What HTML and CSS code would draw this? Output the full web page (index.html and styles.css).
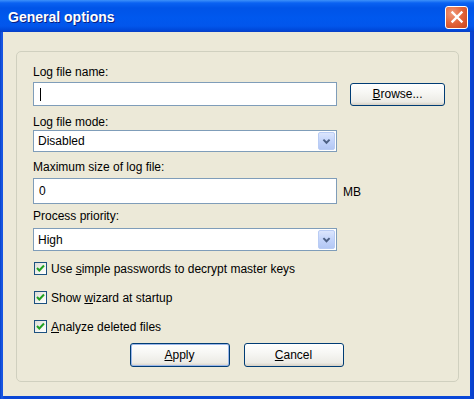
FILE: index.html
```html
<!DOCTYPE html>
<html>
<head>
<meta charset="utf-8">
<link rel="stylesheet" href="styles.css">
</head>
<body>
<div class="window">
  <div class="titlebar">
    <span class="title">General options</span>
    <div class="close">
      <svg width="20" height="20" viewBox="0 0 20 20"><path d="M5.5 5.5 L14.5 14.5 M14.5 5.5 L5.5 14.5" stroke="#fff" stroke-width="2.4" stroke-linecap="square"/></svg>
    </div>
  </div>
  <div class="client">
    <div class="group">
      <div class="field f1">
        <div class="label">Log file name:</div>
        <div class="row">
          <div class="textbox t1"><span class="caret"></span></div>
          <div class="btn browse"><u>B</u>rowse...</div>
        </div>
      </div>
      <div class="field f2">
        <div class="label">Log file mode:</div>
        <div class="select"><span class="value">Disabled</span><span class="drop"><svg width="17" height="20" viewBox="0 0 17 20"><path d="M5 8.5 L8.5 12 L12 8.5" fill="none" stroke="#4D6185" stroke-width="2.2"/></svg></span></div>
      </div>
      <div class="field f3">
        <div class="label">Maximum size of log file:</div>
        <div class="row">
          <div class="textbox t3"><span class="num">0</span></div>
          <span class="unit">MB</span>
        </div>
      </div>
      <div class="field f4">
        <div class="label">Process priority:</div>
        <div class="select s2"><span class="value">High</span><span class="drop"><svg width="17" height="21" viewBox="0 0 17 21"><path d="M5 9 L8.5 12.5 L12 9" fill="none" stroke="#4D6185" stroke-width="2.2"/></svg></span></div>
      </div>
      <div class="checks">
        <div class="check"><span class="box"><svg width="11" height="11" viewBox="0 0 11 11"><path d="M2 5 L4.3 7.5 L9 2.5" fill="none" stroke="#21A121" stroke-width="2"/></svg></span><span>Use <u>s</u>imple passwords to decrypt master keys</span></div>
        <div class="check"><span class="box"><svg width="11" height="11" viewBox="0 0 11 11"><path d="M2 5 L4.3 7.5 L9 2.5" fill="none" stroke="#21A121" stroke-width="2"/></svg></span><span>Show <u>w</u>izard at startup</span></div>
        <div class="check"><span class="box"><svg width="11" height="11" viewBox="0 0 11 11"><path d="M2 5 L4.3 7.5 L9 2.5" fill="none" stroke="#21A121" stroke-width="2"/></svg></span><span><u>A</u>nalyze deleted files</span></div>
      </div>
      <div class="buttons">
        <div class="btn big default"><u>A</u>pply</div>
        <div class="btn big"><u>C</u>ancel</div>
      </div>
    </div>
  </div>
</div>
</body>
</html>
```

FILE: styles.css
```css
html, body {
  margin: 0;
  padding: 0;
  width: 474px;
  height: 399px;
  overflow: hidden;
  background: #0A46D8;
}
.window {
  width: 474px;
  height: 399px;
  display: flex;
  flex-direction: column;
  background: linear-gradient(90deg, #0842C9 0, #1B5AE6 2px, #0A47D6 4px, #0847D8 470px, #0A3EC8 474px);
  font-family: "Liberation Sans", Arial, sans-serif;
  font-size: 12px;
  color: #000;
}
.titlebar {
  height: 32px;
  flex: none;
  display: flex;
  align-items: center;
  justify-content: space-between;
  padding: 0 6px 0 8px;
  box-sizing: border-box;
  background: linear-gradient(180deg, #3D91FA 0, #0A62F2 3px, #0054E8 8px, #0058EE 18px, #0256EC 26px, #0048DA 30px, #0A3FC4 32px);
}
.title {
  color: #fff;
  font-weight: bold;
  font-size: 14px;
  padding-top: 1px;
  text-shadow: 1px 1px 0 #0A1E80;
}
.close {
  width: 21px;
  height: 21px;
  border: 1px solid #fff;
  border-radius: 3px;
  background: radial-gradient(circle at 30% 30%, #F09A7A 0, #E2643A 50%, #C8441C 100%);
  display: flex;
  align-items: center;
  justify-content: center;
  margin-top: 2px;
}
.client {
  flex: 1;
  margin: 0 4px 3px 3px;
  background: #ECE9D8;
  padding: 19px 11px 14px 13px;
  display: flex;
}
.group {
  flex: 1;
  border: 1px solid #D0D0BF;
  border-radius: 5px;
  padding: 13px 12px 12px 16px;
  display: flex;
  flex-direction: column;
}
.label {
  line-height: 14px;
  height: 14px;
}
.f1 .label { margin-bottom: 3px; }
.f2 { margin-top: 9px; }
.f2 .label { margin-bottom: 1px; }
.f3 { margin-top: 8px; }
.f3 .label { margin-bottom: 4px; }
.f4 { margin-top: 5px; }
.f4 .label { margin-bottom: 5px; }
.row {
  display: flex;
  align-items: center;
}
.textbox {
  width: 304px;
  box-sizing: border-box;
  border: 1px solid #7F9DB9;
  background: #fff;
  display: flex;
  align-items: center;
}
.t1 { height: 24px; padding-left: 6px; }
.t3 { height: 26px; padding-left: 5px; }
.caret {
  width: 1px;
  height: 13px;
  background: #000;
}
.unit {
  margin-left: 6px;
  padding-top: 2px;
}
.select {
  width: 304px;
  height: 22px;
  box-sizing: border-box;
  border: 1px solid #7F9DB9;
  background: #fff;
  display: flex;
  justify-content: space-between;
  padding: 1px;
}
.s2 { height: 23px; }
.value {
  padding-left: 3px;
  line-height: 19px;
}
.s2 .value { line-height: 20px; }
.drop {
  width: 17px;
  box-sizing: border-box;
  border: 1px solid #B9CCF4;
  border-radius: 2px;
  background: linear-gradient(180deg, #DCE6FD 0, #C3D4FA 50%, #B3C7F4 100%);
  display: flex;
  align-items: center;
  justify-content: center;
}
.drop svg { display: block; }
.btn {
  box-sizing: border-box;
  border: 1px solid #003C74;
  border-radius: 3px;
  background: linear-gradient(180deg, #FFFFFF 0, #F7F7F4 40%, #ECEBE5 85%, #D6D0C5 100%);
  display: flex;
  align-items: center;
  justify-content: center;
}
.browse {
  width: 95px;
  height: 23px;
  margin-left: 13px;
}
.checks {
  margin-top: 11px;
  display: flex;
  flex-direction: column;
  gap: 16px;
}
.check {
  display: flex;
  align-items: center;
  height: 13px;
  gap: 4px;
}
.box {
  width: 13px;
  height: 13px;
  box-sizing: border-box;
  border: 1px solid #1C5180;
  background: linear-gradient(135deg, #DCDCD7 0, #F4F4F0 60%, #FFFFFF 100%);
  display: flex;
  align-items: center;
  justify-content: center;
  margin-left: 1px;
}
.box svg { display: block; }
.buttons {
  margin-top: 10px;
  padding-right: 6px;
  display: flex;
  justify-content: center;
  gap: 14px;
}
.big {
  width: 100px;
  height: 24px;
}
.default {
  box-shadow: inset 0 0 0 1px #9BB7EA;
}
```
